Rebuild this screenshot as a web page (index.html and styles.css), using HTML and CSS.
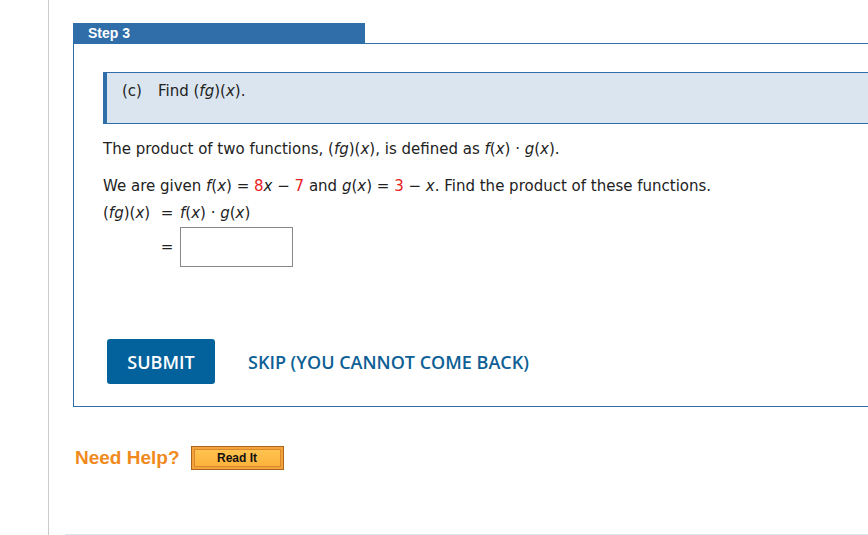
FILE: index.html
```html
<!DOCTYPE html>
<html>
<head>
<meta charset="utf-8">
<link rel="stylesheet" href="styles.css">
</head>
<body>
<div class="rail">
  <div class="tab">Step 3</div>
  <div class="box">
    <div class="prompt"><span class="part">(c)</span>Find (<i>fg</i>)(<i>x</i>).</div>
    <p class="line l1">The product of two functions, (<i>fg</i>)(<i>x</i>), is defined as <i>f</i>(<i>x</i>) · <i>g</i>(<i>x</i>).</p>
    <p class="line l2">We are given <i>f</i>(<i>x</i>) = <span class="red">8</span><i>x</i> − <span class="red">7</span> and <i>g</i>(<i>x</i>) = <span class="red">3</span> − <i>x</i>. Find the product of these functions.</p>
    <div class="eq">
      <div class="lhs">(<i>fg</i>)(<i>x</i>)</div>
      <div class="op">=</div>
      <div class="rhs"><i>f</i>(<i>x</i>) · <i>g</i>(<i>x</i>)</div>
      <div class="lhs"></div>
      <div class="op op2">=</div>
      <div class="rhs"><span class="answer"></span></div>
    </div>
    <div class="actions">
      <span class="submit">SUBMIT</span>
      <span class="skip">SKIP (YOU CANNOT COME BACK)</span>
    </div>
  </div>
  <div class="help">
    <span class="need">Need Help?</span>
    <span class="readit"><span class="readit-in">Read It</span></span>
  </div>
  <div class="footer-line"></div>
</div>
</body>
</html>
```

FILE: styles.css
```css
html, body {
  margin: 0;
  padding: 0;
  background: #fff;
  overflow: hidden;
}
body {
  width: 868px;
  height: 535px;
  font-family: "DejaVu Sans", Verdana, sans-serif;
  color: #222;
}
.rail {
  margin-left: 48px;
  border-left: 1px solid #cbcbcb;
  height: 535px;
  box-sizing: border-box;
  padding-top: 23px;
  padding-left: 24px;
}
.tab {
  width: 292px;
  height: 20px;
  box-sizing: border-box;
  background: #2f6ea9;
  color: #fff;
  font: bold 14px/20px "Liberation Sans", Arial, sans-serif;
  padding-left: 15px;
}
.box {
  width: 765px;
  border: 1px solid #2f6ea9;
  border-right: none;
  padding: 28px 0 22px 29px;
}
.prompt {
  height: 52px;
  box-sizing: border-box;
  background: #dae5ef;
  border-top: 1px solid #2f6ea9;
  border-bottom: 1px solid #2f6ea9;
  border-left: 4px solid #2f6ea9;
  padding: 8px 0 0 15px;
  font-size: 15px;
  line-height: 20px;
}
.part {
  display: inline-block;
  width: 36px;
}
.line {
  margin: 0;
  font-size: 15px;
  line-height: 20px;
}
.l1 { margin-top: 15px; }
.l2 { margin-top: 17px; }
.red { color: #e8211f; }
.eq {
  display: grid;
  grid-template-columns: 54px 23px auto;
  justify-content: start;
  align-items: center;
  margin-top: 7px;
  font-size: 15px;
  line-height: 20px;
}
.lhs { white-space: nowrap; }
.op { text-align: center; padding-right: 3px; }
.op2 { padding-top: 4px; }
.rhs { white-space: nowrap; }
.answer {
  display: block;
  width: 111px;
  height: 38px;
  border: 1px solid #888;
  margin-top: 4px;
}
.actions {
  display: flex;
  align-items: center;
  margin-top: 72px;
  margin-left: 4px;
  font-family: "Open Sans", sans-serif;
  font-weight: 600;
  font-size: 18px;
}
.submit {
  width: 108px;
  height: 45px;
  box-sizing: border-box;
  background: #03629b;
  color: #fff;
  border-radius: 3px;
  display: flex;
  align-items: center;
  justify-content: center;
}
.skip {
  margin-left: 33px;
  color: #0d5f95;
}
.help {
  display: flex;
  align-items: center;
  margin-top: 39px;
  margin-left: 2px;
  height: 24px;
}
.need {
  font: bold 19px "Liberation Sans", Arial, sans-serif;
  color: #f08a1d;
}
.readit {
  margin-left: 11px;
  width: 93px;
  height: 24px;
  box-sizing: border-box;
  border: 1px solid #a8661f;
  background: #f4a23a;
  padding: 2px;
  display: flex;
}
.readit-in {
  flex: 1;
  border: 1px solid #d8892f;
  background: linear-gradient(#ffc34f, #fcb33c);
  font: bold 12px/16px "Liberation Sans", Arial, sans-serif;
  color: #111;
  text-align: center;
}
.footer-line {
  margin-top: 64px;
  margin-left: -8px;
  width: 803px;
  border-top: 1px solid #dbe6ef;
}
```
